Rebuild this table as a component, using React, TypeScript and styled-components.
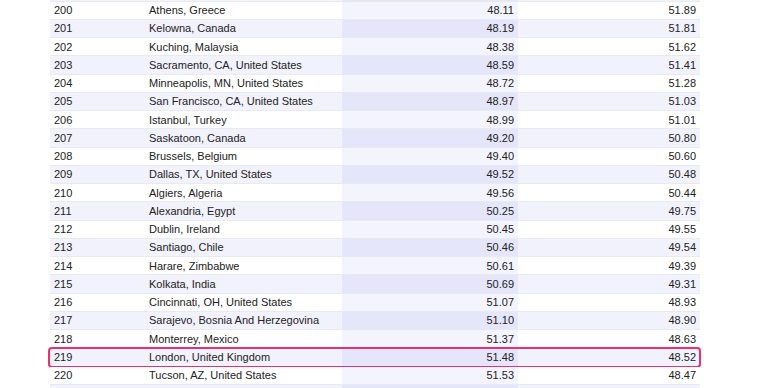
import React from 'react';
import styled, { createGlobalStyle, css } from 'styled-components';

const GlobalStyle = createGlobalStyle`
  html, body {
    margin: 0;
    padding: 0;
    background: #ffffff;
  }
  body {
    font-family: "Liberation Sans", Arial, Helvetica, sans-serif;
    overflow: hidden;
  }
`;

const Page = styled.div`
  width: 768px;
  height: 388px;
  overflow: hidden;
  display: flex;
  align-items: flex-start;
  padding-left: 50px;
  box-sizing: border-box;
`;

const Table = styled.div`
  width: 650px;
  margin-top: -16.75px;
  display: flex;
  flex-direction: column;
  flex-shrink: 0;
`;

const Row = styled.div<{ $striped: boolean; $marked?: boolean }>`
  position: relative;
  flex-shrink: 0;
  display: grid;
  grid-template-columns: 95px 197px 176px 182px;
  height: 18.25px;
  box-sizing: border-box;
  border-bottom: 1px solid #e9e9f1;
  background: ${(p) => (p.$striped ? '#f2f2fc' : '#ffffff')};
  font-size: 11px;
  color: #222222;

  ${(p) =>
    p.$marked &&
    css`
      &::after {
        content: '';
        position: absolute;
        left: -2px;
        right: -1px;
        top: -1px;
        bottom: -2px;
        border: 2px solid #e8316d;
        border-radius: 4px;
        pointer-events: none;
      }
    `}
`;

const Cell = styled.div<{ $align?: 'left' | 'right'; $sorted?: boolean; $striped?: boolean }>`
  display: flex;
  align-items: center;
  justify-content: ${(p) => (p.$align === 'right' ? 'flex-end' : 'flex-start')};
  padding: 0 4px;
  white-space: nowrap;
  overflow: hidden;
  background: ${(p) => (p.$sorted ? (p.$striped ? '#e6e6fa' : '#f4f4fe') : 'transparent')};
`;

type City = {
  rank: number;
  name: string;
  a: string;
  b: string;
};

const cities: City[] = [
  { rank: 199, name: '', a: '', b: '' },
  { rank: 200, name: 'Athens, Greece', a: '48.11', b: '51.89' },
  { rank: 201, name: 'Kelowna, Canada', a: '48.19', b: '51.81' },
  { rank: 202, name: 'Kuching, Malaysia', a: '48.38', b: '51.62' },
  { rank: 203, name: 'Sacramento, CA, United States', a: '48.59', b: '51.41' },
  { rank: 204, name: 'Minneapolis, MN, United States', a: '48.72', b: '51.28' },
  { rank: 205, name: 'San Francisco, CA, United States', a: '48.97', b: '51.03' },
  { rank: 206, name: 'Istanbul, Turkey', a: '48.99', b: '51.01' },
  { rank: 207, name: 'Saskatoon, Canada', a: '49.20', b: '50.80' },
  { rank: 208, name: 'Brussels, Belgium', a: '49.40', b: '50.60' },
  { rank: 209, name: 'Dallas, TX, United States', a: '49.52', b: '50.48' },
  { rank: 210, name: 'Algiers, Algeria', a: '49.56', b: '50.44' },
  { rank: 211, name: 'Alexandria, Egypt', a: '50.25', b: '49.75' },
  { rank: 212, name: 'Dublin, Ireland', a: '50.45', b: '49.55' },
  { rank: 213, name: 'Santiago, Chile', a: '50.46', b: '49.54' },
  { rank: 214, name: 'Harare, Zimbabwe', a: '50.61', b: '49.39' },
  { rank: 215, name: 'Kolkata, India', a: '50.69', b: '49.31' },
  { rank: 216, name: 'Cincinnati, OH, United States', a: '51.07', b: '48.93' },
  { rank: 217, name: 'Sarajevo, Bosnia And Herzegovina', a: '51.10', b: '48.90' },
  { rank: 218, name: 'Monterrey, Mexico', a: '51.37', b: '48.63' },
  { rank: 219, name: 'London, United Kingdom', a: '51.48', b: '48.52' },
  { rank: 220, name: 'Tucson, AZ, United States', a: '51.53', b: '48.47' },
  { rank: 221, name: '', a: '', b: '' },
];

const App = (): JSX.Element => {
  return (
    <>
      <GlobalStyle />
      <Page>
        <Table>
          {cities.map((city) => {
            const striped = city.rank % 2 === 1;
            return (
              <Row key={city.rank} $striped={striped} $marked={city.rank === 219}>
                <Cell>{city.name ? city.rank : ''}</Cell>
                <Cell>{city.name}</Cell>
                <Cell $align="right" $sorted $striped={striped}>
                  {city.a}
                </Cell>
                <Cell $align="right">{city.b}</Cell>
              </Row>
            );
          })}
        </Table>
      </Page>
    </>
  );
};

export default App;
